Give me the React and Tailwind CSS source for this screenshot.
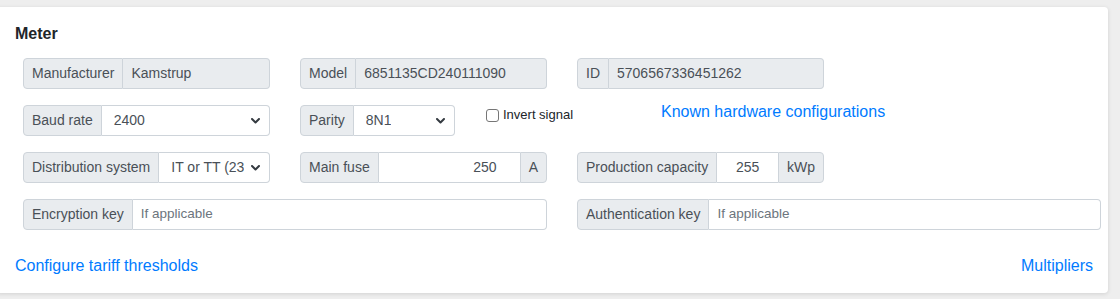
import React from 'react';

const font = { fontFamily: '"Liberation Sans", Arial, sans-serif' };

const Chevron = () => (
  <svg width="9" height="6" viewBox="0 0 9 6" className="shrink-0">
    <path d="M1 1l3.5 3.5L8 1" fill="none" stroke="#343a40" strokeWidth="2" strokeLinecap="round" strokeLinejoin="round" />
  </svg>
);

const Addon = ({ children, className = '' }) => (
  <span className={`flex shrink-0 items-center border border-[#ced4da] bg-[#e9ecef] px-2 text-[#495057] ${className}`}>
    {children}
  </span>
);

const ReadonlyGroup = ({ label, value }) => (
  <div className="flex h-[31px] text-[14px]">
    <Addon className="rounded-l">{label}</Addon>
    <span className="flex flex-1 items-center rounded-r border border-l-0 border-[#ced4da] bg-[#e9ecef] px-2 text-[#495057]">
      {value}
    </span>
  </div>
);

const SelectGroup = ({ label, value, className = '' }) => (
  <div className={`flex h-[31px] text-[14px] ${className}`}>
    <Addon className="rounded-l">{label}</Addon>
    <span className="flex min-w-0 flex-1 items-center justify-between rounded-r border border-l-0 border-[#ced4da] bg-white pl-3 pr-[9px] text-[#495057]">
      <span className="overflow-hidden whitespace-nowrap">{value}</span>
      <Chevron />
    </span>
  </div>
);

const KeyGroup = ({ label }) => (
  <div className="col-span-2 flex h-[31px] text-[14px]">
    <Addon className="rounded-l">{label}</Addon>
    <span className="flex flex-1 items-center rounded-r border border-l-0 border-[#ced4da] bg-white px-2 text-[13.5px] text-[#6c757d]">
      If applicable
    </span>
  </div>
);

export default function App() {
  return (
    <div className="h-[299px] w-[1120px] overflow-hidden bg-[#eeeeee] pt-[7px]" style={font}>
      <div className="-ml-1 mr-[12px] h-[286px] rounded bg-white pl-[19px] pr-[7px] pt-[17px] shadow-[0_1px_4px_rgba(0,0,0,0.12)]">
        <h2 className="text-[16px] font-bold leading-[20px] text-[#212529]">Meter</h2>

        <div className="ml-[8px] mt-[14px] grid grid-cols-[repeat(4,247px)] gap-x-[30px] gap-y-[16px]">
          <ReadonlyGroup label="Manufacturer" value="Kamstrup" />
          <ReadonlyGroup label="Model" value="6851135CD240111090" />
          <ReadonlyGroup label="ID" value="5706567336451262" />
          <div />

          <SelectGroup label="Baud rate" value="2400" />
          <div className="flex whitespace-nowrap">
            <SelectGroup label="Parity" value="8N1" className="w-[155px] shrink-0" />
            <label className="ml-[31px] mt-[2px] flex h-[16px] shrink-0 items-center gap-[4px] text-[13px] text-[#212529]">
              <span className="h-[13px] w-[13px] rounded-[3px] border border-[#767676] bg-white" />
              Invert signal
            </label>
          </div>
          <div className="col-span-2 -mt-[5px] pl-[84px]">
            <a className="text-[16px] leading-[20px] text-[#007bff]">Known hardware configurations</a>
          </div>

          <SelectGroup label="Distribution system" value="IT or TT (23" />
          <div className="flex h-[31px] text-[14px]">
            <Addon className="rounded-l">Main fuse</Addon>
            <span className="flex flex-1 items-center justify-end border border-x-0 border-[#ced4da] bg-white px-[23px] text-[#495057]">
              250
            </span>
            <Addon className="rounded-r">A</Addon>
          </div>
          <div className="flex h-[31px] text-[14px]">
            <Addon className="rounded-l">Production capacity</Addon>
            <span className="flex w-[64px] items-center justify-center border border-x-0 border-[#ced4da] bg-white text-[#495057]">
              255
            </span>
            <Addon className="rounded-r">kWp</Addon>
          </div>
          <div />

          <KeyGroup label="Encryption key" />
          <KeyGroup label="Authentication key" />
        </div>

        <div className="mt-[26px] flex items-center justify-between pr-[8px] text-[16px] leading-[20px] text-[#007bff]">
          <a>Configure tariff thresholds</a>
          <a>Multipliers</a>
        </div>
      </div>
    </div>
  );
}
